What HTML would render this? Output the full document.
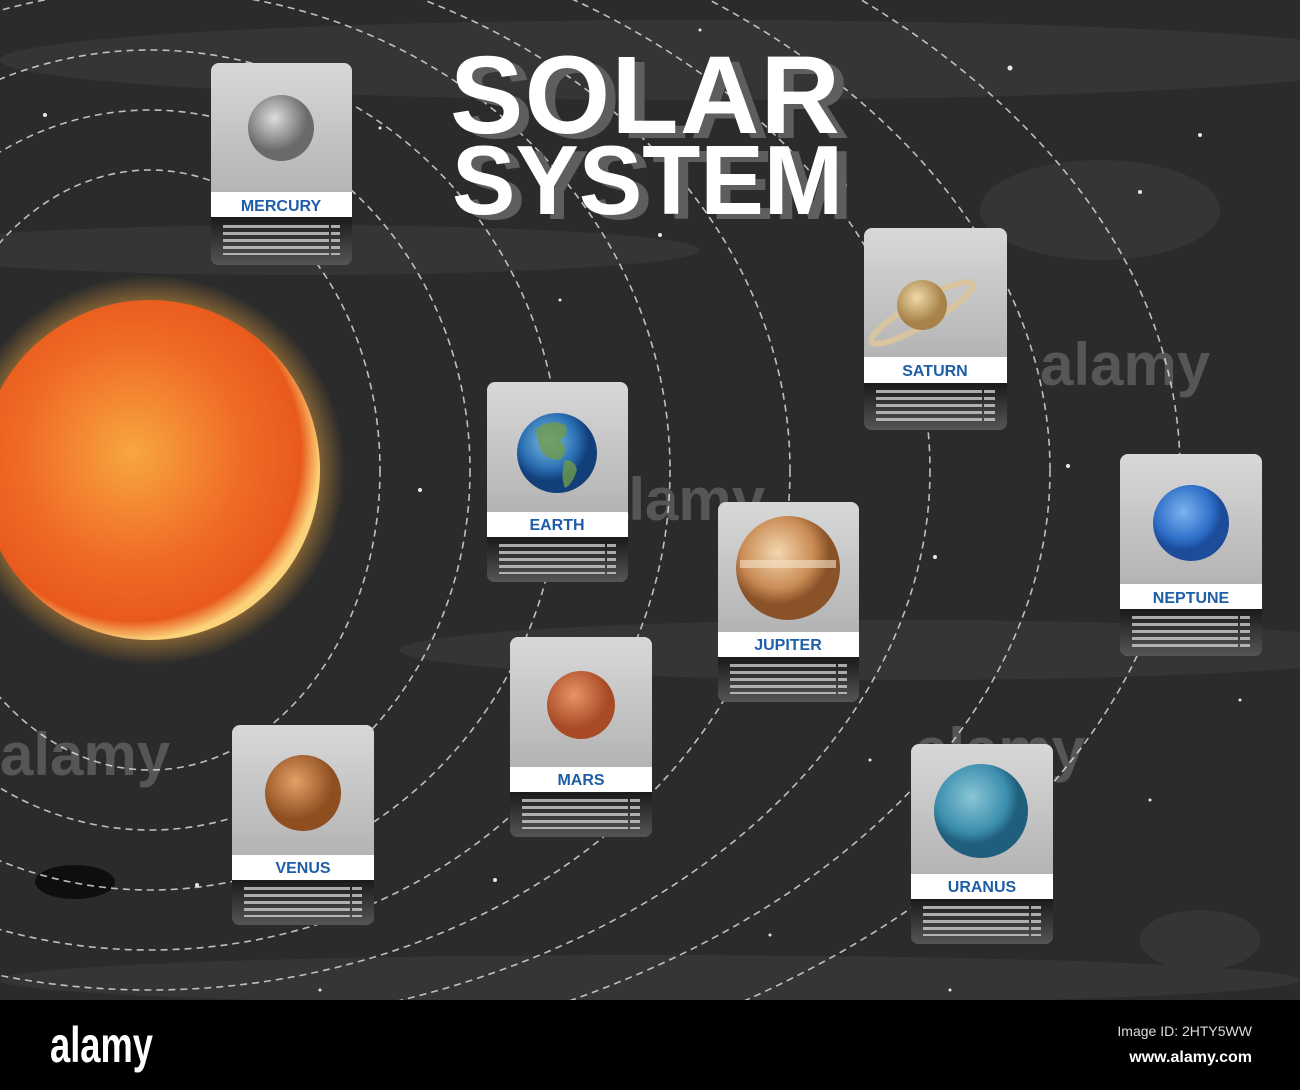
<!DOCTYPE html>
<html><head><meta charset="utf-8"><style>
html,body{margin:0;padding:0;width:1300px;height:1090px;overflow:hidden;background:#000;font-family:"Liberation Sans",sans-serif}
svg{display:block}
</style></head><body>
<svg width="1300" height="1090" viewBox="0 0 1300 1090" xmlns="http://www.w3.org/2000/svg">
<defs>
<radialGradient id="sun" cx="0.45" cy="0.45" r="0.55">
<stop offset="0" stop-color="#f7a640"/><stop offset="0.6" stop-color="#f06a25"/><stop offset="0.9" stop-color="#e85a1c"/><stop offset="1" stop-color="#fbd27a"/></radialGradient>
<radialGradient id="glow" cx="0.5" cy="0.5" r="0.5">
<stop offset="0.8" stop-color="#ffb040" stop-opacity="0.6"/><stop offset="1" stop-color="#ffb040" stop-opacity="0"/></radialGradient>
<linearGradient id="card" x1="0" y1="0" x2="0" y2="1"><stop offset="0" stop-color="#d8d8d8"/><stop offset="1" stop-color="#a0a0a0"/></linearGradient>
<linearGradient id="cardb" x1="0" y1="0" x2="0" y2="1"><stop offset="0" stop-color="#1a1a1a"/><stop offset="1" stop-color="#555"/></linearGradient>
<radialGradient id="merc" cx=".4" cy=".35"><stop offset="0" stop-color="#ddd"/><stop offset="1" stop-color="#6a6a6a"/></radialGradient>
<radialGradient id="earth" cx=".4" cy=".35"><stop offset="0" stop-color="#7fc0e0"/><stop offset=".7" stop-color="#2a6fb3"/><stop offset="1" stop-color="#123e7a"/></radialGradient>
<radialGradient id="jup" cx=".4" cy=".35"><stop offset="0" stop-color="#f3d7b0"/><stop offset=".7" stop-color="#c98b55"/><stop offset="1" stop-color="#8a5228"/></radialGradient>
<radialGradient id="nep" cx=".4" cy=".35"><stop offset="0" stop-color="#7db3ef"/><stop offset=".75" stop-color="#2f6fc9"/><stop offset="1" stop-color="#1c4c9a"/></radialGradient>
<radialGradient id="mars" cx=".4" cy=".35"><stop offset="0" stop-color="#e89466"/><stop offset="1" stop-color="#a84a26"/></radialGradient>
<radialGradient id="ven" cx=".4" cy=".35"><stop offset="0" stop-color="#e5a066"/><stop offset="1" stop-color="#8e4e20"/></radialGradient>
<radialGradient id="ura" cx=".4" cy=".35"><stop offset="0" stop-color="#8ac6d6"/><stop offset=".75" stop-color="#3c8fae"/><stop offset="1" stop-color="#1f5f7c"/></radialGradient>
<radialGradient id="sat" cx=".4" cy=".35"><stop offset="0" stop-color="#f0d9a8"/><stop offset="1" stop-color="#a7834a"/></radialGradient>
<pattern id="txt" width="120" height="7" patternUnits="userSpaceOnUse"><rect x="0" y="1" width="118" height="3" fill="#ccc"/></pattern>
</defs>
<rect width="1300" height="1000" fill="#2b2b2b"/>
<g fill="#353535">
<ellipse cx="700" cy="60" rx="700" ry="40"/>
<ellipse cx="1100" cy="210" rx="120" ry="50"/>
<ellipse cx="900" cy="650" rx="500" ry="30"/>
<ellipse cx="300" cy="250" rx="400" ry="25"/>
<ellipse cx="650" cy="980" rx="650" ry="25"/>
<ellipse cx="1200" cy="940" rx="60" ry="30"/>
</g>
<ellipse cx="75" cy="882" rx="40" ry="17" fill="#0e0e0e"/>
<g fill="none" stroke="#d8d8d8" stroke-width="1.6" stroke-dasharray="7 5" opacity="0.85">
<ellipse cx="150" cy="470" rx="230" ry="300"/>
<ellipse cx="150" cy="470" rx="320" ry="360"/>
<ellipse cx="150" cy="470" rx="410" ry="420"/>
<ellipse cx="150" cy="470" rx="520" ry="480"/>
<ellipse cx="150" cy="470" rx="640" ry="520"/>
<ellipse cx="150" cy="470" rx="780" ry="560"/>
<ellipse cx="150" cy="470" rx="900" ry="600"/>
<ellipse cx="150" cy="470" rx="1030" ry="650"/>
</g>
<g fill="#e8e8e8">
<circle cx="45" cy="115" r="2"/><circle cx="420" cy="490" r="2"/><circle cx="660" cy="235" r="2"/><circle cx="1010" cy="68" r="2.5"/><circle cx="1200" cy="135" r="2"/><circle cx="1140" cy="192" r="2"/><circle cx="1068" cy="466" r="2"/><circle cx="935" cy="557" r="2"/><circle cx="380" cy="128" r="1.5"/><circle cx="845" cy="185" r="2"/><circle cx="197" cy="885" r="2"/><circle cx="495" cy="880" r="2"/><circle cx="770" cy="935" r="1.5"/><circle cx="1240" cy="700" r="1.5"/><circle cx="700" cy="30" r="1.5"/><circle cx="560" cy="300" r="1.5"/><circle cx="870" cy="760" r="1.5"/><circle cx="1150" cy="800" r="1.5"/><circle cx="320" cy="990" r="1.5"/><circle cx="950" cy="990" r="1.5"/>
</g>
<circle cx="150" cy="470" r="195" fill="url(#glow)"/>
<circle cx="150" cy="470" r="170" fill="url(#sun)"/>
<g font-family="Liberation Sans, sans-serif" font-weight="bold">
<text x="460" y="138" font-size="110" fill="#5e5e5e" textLength="390" lengthAdjust="spacing">SOLAR</text>
<text x="462" y="219" font-size="98" fill="#5e5e5e" textLength="391" lengthAdjust="spacingAndGlyphs">SYSTEM</text>
<text x="450" y="133" font-size="110" fill="#fff" textLength="390" lengthAdjust="spacing">SOLAR</text>
<text x="452" y="214" font-size="98" fill="#fff" textLength="391" lengthAdjust="spacingAndGlyphs">SYSTEM</text>
</g>
<g font-family="Liberation Sans, sans-serif" font-weight="bold" fill="#fff" opacity="0.2" font-size="60">
<text x="1040" y="385">alamy</text>
<text x="595" y="520">alamy</text>
<text x="0" y="775">alamy</text>
<text x="915" y="770">alamy</text>
</g>
<g font-family="Liberation Sans, sans-serif" font-weight="bold" font-size="16" fill="#1e5ea8" text-anchor="middle">
<g transform="translate(211,63)"><rect width="141" height="202" rx="8" fill="url(#card)"/><path d="M0 154H141V194a8 8 0 0 1-8 8H8a8 8 0 0 1-8-8Z" fill="url(#cardb)"/><rect y="129" width="141" height="25" fill="#fff"/><text x="70" y="148">MERCURY</text><rect x="12" y="160" width="117" height="32" fill="url(#txt)" opacity=".8"/></g>
<circle cx="281" cy="128" r="33" fill="url(#merc)"/>
<g transform="translate(487,382)"><rect width="141" height="200" rx="8" fill="url(#card)"/><path d="M0 155H141V192a8 8 0 0 1-8 8H8a8 8 0 0 1-8-8Z" fill="url(#cardb)"/><rect y="130" width="141" height="25" fill="#fff"/><text x="70" y="148">EARTH</text><rect x="12" y="160" width="117" height="32" fill="url(#txt)" opacity=".8"/></g>
<circle cx="557" cy="453" r="40" fill="url(#earth)"/>
<path d="M535 430q15-12 30-5 5 10-5 15 10 10 0 20-15 0-20-12z M565 460q10 0 12 10-5 15-12 18-5-12 0-28z" fill="#6f9a4a" opacity=".8"/>
<g transform="translate(864,228)"><rect width="143" height="202" rx="8" fill="url(#card)"/><path d="M0 155H143V194a8 8 0 0 1-8 8H8a8 8 0 0 1-8-8Z" fill="url(#cardb)"/><rect y="129" width="143" height="26" fill="#fff"/><text x="71" y="148">SATURN</text><rect x="12" y="161" width="119" height="32" fill="url(#txt)" opacity=".8"/></g>
<ellipse cx="922" cy="313" rx="58" ry="12" transform="rotate(-30 922 313)" fill="none" stroke="#d8c5a0" stroke-width="6"/>
<circle cx="922" cy="305" r="25" fill="url(#sat)"/>
<g transform="translate(718,502)"><rect width="141" height="200" rx="8" fill="url(#card)"/><path d="M0 155H141V192a8 8 0 0 1-8 8H8a8 8 0 0 1-8-8Z" fill="url(#cardb)"/><rect y="130" width="141" height="25" fill="#fff"/><text x="70" y="148">JUPITER</text><rect x="12" y="160" width="117" height="32" fill="url(#txt)" opacity=".8"/></g>
<circle cx="788" cy="568" r="52" fill="url(#jup)"/>
<rect x="740" y="560" width="96" height="8" fill="#f5e3c8" opacity=".6"/>
<g transform="translate(1120,454)"><rect width="142" height="202" rx="8" fill="url(#card)"/><path d="M0 155H142V194a8 8 0 0 1-8 8H8a8 8 0 0 1-8-8Z" fill="url(#cardb)"/><rect y="130" width="142" height="25" fill="#fff"/><text x="71" y="149">NEPTUNE</text><rect x="12" y="161" width="118" height="32" fill="url(#txt)" opacity=".8"/></g>
<circle cx="1191" cy="523" r="38" fill="url(#nep)"/>
<g transform="translate(510,637)"><rect width="142" height="200" rx="8" fill="url(#card)"/><path d="M0 155H142V192a8 8 0 0 1-8 8H8a8 8 0 0 1-8-8Z" fill="url(#cardb)"/><rect y="130" width="142" height="25" fill="#fff"/><text x="71" y="148">MARS</text><rect x="12" y="160" width="118" height="32" fill="url(#txt)" opacity=".8"/></g>
<circle cx="581" cy="705" r="34" fill="url(#mars)"/>
<g transform="translate(232,725)"><rect width="142" height="200" rx="8" fill="url(#card)"/><path d="M0 155H142V192a8 8 0 0 1-8 8H8a8 8 0 0 1-8-8Z" fill="url(#cardb)"/><rect y="130" width="142" height="25" fill="#fff"/><text x="71" y="148">VENUS</text><rect x="12" y="160" width="118" height="32" fill="url(#txt)" opacity=".8"/></g>
<circle cx="303" cy="793" r="38" fill="url(#ven)"/>
<g transform="translate(911,744)"><rect width="142" height="200" rx="8" fill="url(#card)"/><path d="M0 155H142V192a8 8 0 0 1-8 8H8a8 8 0 0 1-8-8Z" fill="url(#cardb)"/><rect y="130" width="142" height="25" fill="#fff"/><text x="71" y="148">URANUS</text><rect x="12" y="160" width="118" height="32" fill="url(#txt)" opacity=".8"/></g>
<circle cx="981" cy="811" r="47" fill="url(#ura)"/>
</g>
<rect y="1000" width="1300" height="90" fill="#000"/>
<text x="50" y="1062" font-family="Liberation Sans, sans-serif" font-weight="bold" font-size="50" fill="#fff" textLength="103" lengthAdjust="spacingAndGlyphs">alamy</text>
<text x="1252" y="1036" text-anchor="end" font-family="Liberation Sans, sans-serif" font-size="14" fill="#ddd">Image ID: 2HTY5WW</text>
<text x="1252" y="1062" text-anchor="end" font-family="Liberation Sans, sans-serif" font-weight="bold" font-size="16" fill="#fff">www.alamy.com</text>
</svg>
</body></html>
